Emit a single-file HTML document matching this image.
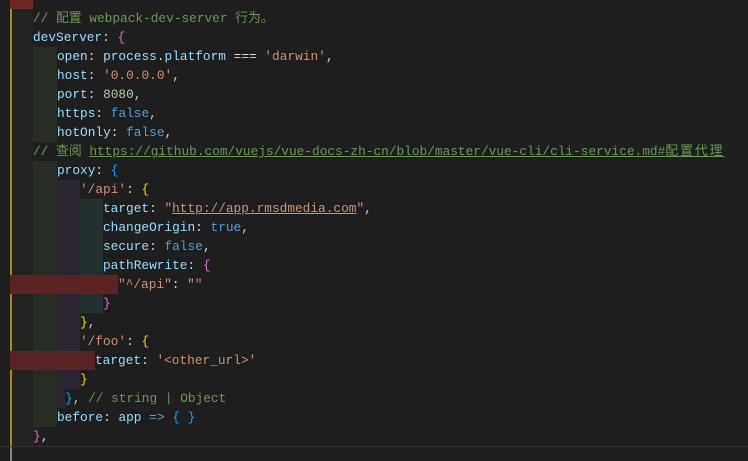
<!DOCTYPE html>
<html><head><meta charset="utf-8"><style>
body{margin:0;width:748px;height:461px;background:#1e1e1e;overflow:hidden;position:relative;font-family:"Liberation Mono","Noto Sans CJK SC",monospace;font-size:12.8px}
.b{position:absolute;height:19px}
.l{position:absolute;height:19px;line-height:19px;white-space:pre;color:#d4d4d4}
.k{color:#9cdcfe}.s{color:#ce9178}.c{color:#6a9955}.kw{color:#569cd6}.n{color:#b5cea8}
.y{color:#ffd700}.p{color:#da70d6}.bl{color:#179fff}
</style></head><body>
<div class="b" style="left:10px;top:0;width:2px;height:447px;background:#a08a2a"></div>
<div class="b" style="left:12px;top:0;width:21px;height:446px;background:#222320"></div>
<div class="b" style="left:10px;top:0;width:23px;height:9px;background:#6a2a25"></div>
<div class="b" style="left:33px;top:47px;width:24px;height:380px;background:#272c25"></div>
<div class="b" style="left:33px;top:142px;width:24px;height:19px;background:#1e1e1e"></div>
<div class="b" style="left:57px;top:180px;width:23px;height:209px;background:#2a2530"></div>
<div class="b" style="left:80px;top:199px;width:23px;height:114px;background:#23302f"></div>
<div class="b" style="left:57px;top:389px;width:8px;height:19px;background:#2a2530"></div>
<div class="b" style="left:103px;top:275px;width:14px;height:19px;background:#2a2f3a"></div>
<div class="b" style="left:10px;top:275px;width:108px;height:19px;background:#5a2424"></div>
<div class="b" style="left:10px;top:351px;width:85px;height:19px;background:#5a2424"></div>
<div class="b" style="left:0;top:446px;width:748px;height:1px;background:#333"></div>
<div class="b" style="left:10px;top:447px;width:2px;height:14px;background:#888"></div>

<div class="l c" style="left:33px;top:9px">// 配置 webpack-dev-server 行为。</div>
<div class="l" style="left:33px;top:28px"><span class="k">devServer</span>: <span class="p">{</span></div>
<div class="l" style="left:57px;top:47px"><span class="k">open</span>: <span class="k">process</span>.<span class="k">platform</span> === <span class="s">'darwin'</span>,</div>
<div class="l" style="left:57px;top:66px"><span class="k">host</span>: <span class="s">'0.0.0.0'</span>,</div>
<div class="l" style="left:57px;top:85px"><span class="k">port</span>: <span class="n">8080</span>,</div>
<div class="l" style="left:57px;top:104px"><span class="k">https</span>: <span class="kw">false</span>,</div>
<div class="l" style="left:57px;top:123px"><span class="k">hotOnly</span>: <span class="kw">false</span>,</div>
<div class="l c" style="left:33px;top:142px">// 查阅 <span style="text-decoration:underline">https://github.com/vuejs/vue-docs-zh-cn/blob/master/vue-cli/cli-service.md#<span style="letter-spacing:2px">配置代理</span></span></div>
<div class="l" style="left:57px;top:161px"><span class="k">proxy</span>: <span class="bl">{</span></div>
<div class="l" style="left:80px;top:180px"><span class="s">'/api'</span>: <span class="y">{</span></div>
<div class="l" style="left:103px;top:199px"><span class="k">target</span>: <span class="s">"<span style="text-decoration:underline">http://app.rmsdmedia.com</span>"</span>,</div>
<div class="l" style="left:103px;top:218px"><span class="k">changeOrigin</span>: <span class="kw">true</span>,</div>
<div class="l" style="left:103px;top:237px"><span class="k">secure</span>: <span class="kw">false</span>,</div>
<div class="l" style="left:103px;top:256px"><span class="k">pathRewrite</span>: <span class="p">{</span></div>
<div class="l" style="left:118px;top:275px"><span class="s">"^/api"</span>: <span class="s">""</span></div>
<div class="l" style="left:103px;top:294px"><span class="p">}</span></div>
<div class="l" style="left:80px;top:313px"><span class="y">}</span>,</div>
<div class="l" style="left:80px;top:332px"><span class="s">'/foo'</span>: <span class="y">{</span></div>
<div class="l" style="left:95px;top:351px"><span class="k">target</span>: <span class="s">'&lt;other_url&gt;'</span></div>
<div class="l" style="left:80px;top:370px"><span class="y">}</span></div>
<div class="l" style="left:65px;top:389px"><span class="bl">}</span>, <span class="c">// string | Object</span></div>
<div class="l" style="left:57px;top:408px"><span class="k">before</span>: <span class="k">app</span> <span class="kw">=&gt;</span> <span class="bl">{ }</span></div>
<div class="l" style="left:33px;top:427px"><span class="p">}</span>,</div>
</body></html>
